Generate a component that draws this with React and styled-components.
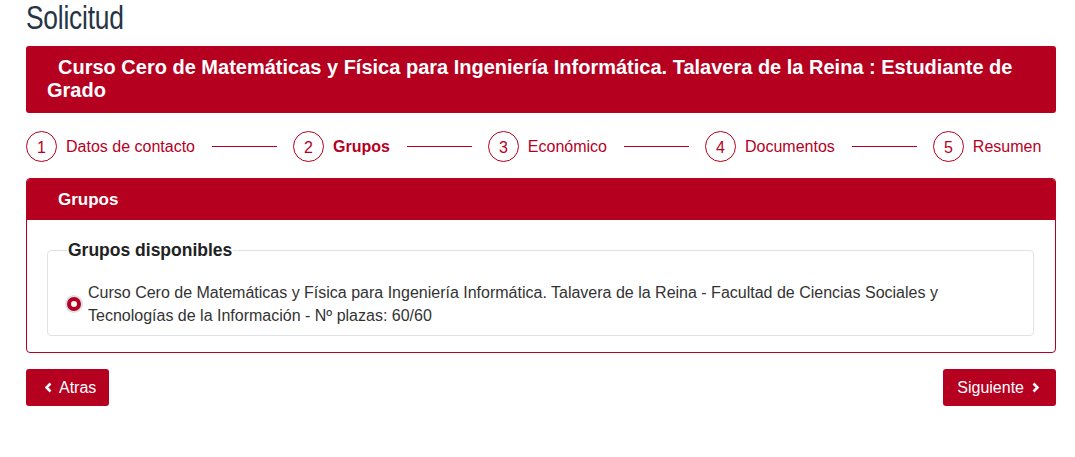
import React from 'react';
import styled, { createGlobalStyle } from 'styled-components';

const RED = '#b5001f';

const GlobalStyle = createGlobalStyle`
  body {
    margin: 0;
    background: #fff;
    font-family: "Liberation Sans", Arial, sans-serif;
  }
`;

const Page = styled.div`
  padding: 0 19px 0 26px;
`;

const Title = styled.h1`
  margin: -1px 0 0;
  display: inline-block;
  font-family: "Liberation Sans", Arial, sans-serif;
  font-weight: 400;
  font-size: 33px;
  line-height: 38px;
  letter-spacing: -0.3px;
  color: #263545;
  transform: scaleX(0.8);
  transform-origin: left center;
`;

const Banner = styled.div`
  margin-top: 9px;
  background: ${RED};
  border-radius: 3px;
  padding: 10px 21px 11px;
  color: #fff;
  font-weight: 700;
  font-size: 20px;
  line-height: 23px;
  text-indent: 11px;
`;

const Steps = styled.ol`
  list-style: none;
  margin: 18px 0 0;
  padding: 0;
  display: flex;
  align-items: center;
  height: 31px;
`;

const Step = styled.li`
  display: flex;
  align-items: center;
  gap: 9px;
  color: ${RED};
  font-size: 16px;
  font-weight: ${(p) => (p.$active ? 700 : 400)};
`;

const Circle = styled.span`
  width: 29px;
  height: 26px;
  padding-top: 3px;
  border: 1px solid ${RED};
  border-radius: 50%;
  display: flex;
  align-items: center;
  justify-content: center;
  font-weight: 400;
`;

const Line = styled.span`
  width: 65px;
  height: 1px;
  background: ${RED};
  margin: 0 16px 0 17px;
`;

const Panel = styled.section`
  margin-top: 16px;
  border: 1px solid ${RED};
  border-radius: 4px;
  overflow: hidden;
`;

const PanelHeader = styled.div`
  background: ${RED};
  color: #fff;
  font-weight: 700;
  font-size: 17px;
  height: 41px;
  display: flex;
  align-items: center;
  padding-left: 31px;
`;

const PanelBody = styled.div`
  padding: 20px 21px 16px 20px;
`;

const Fieldset = styled.fieldset`
  margin: 0;
  border: 1px solid #dfe2e8;
  border-radius: 4px;
  padding: 0 20px 8px 19px;
`;

const Legend = styled.legend`
  padding: 0 1px;
  font-size: 17.5px;
  font-weight: 700;
  line-height: 20px;
  color: #222;
`;

const Option = styled.label`
  margin-top: 21px;
  display: flex;
  align-items: center;
  gap: 7px;
  font-size: 16px;
  line-height: 23px;
  color: #333;
  cursor: pointer;
`;

const Radio = styled.span`
  flex: none;
  width: 6px;
  height: 6px;
  border-radius: 50%;
  background: #fff;
  border: 4px solid ${RED};
  box-shadow: 0 0 0 2px #dcdfe6;
`;

const Actions = styled.div`
  margin-top: 16px;
  display: flex;
  justify-content: space-between;
`;

const Button = styled.button`
  height: 37px;
  border: none;
  border-radius: 3px;
  background: ${RED};
  color: #fff;
  font-family: "Liberation Sans", Arial, sans-serif;
  font-size: 16px;
  padding: ${(p) => p.$pad};
  display: flex;
  align-items: center;
  gap: ${(p) => p.$gap}px;
  cursor: pointer;
`;

const Chevron = ({ dir }) => (
  <svg width="7" height="11" viewBox="0 0 7 11">
    <polyline
      points={dir === 'left' ? '5.5,1.5 1.5,5.5 5.5,9.5' : '1.5,1.5 5.5,5.5 1.5,9.5'}
      fill="none"
      stroke="#fff"
      strokeWidth="2.5"
    />
  </svg>
);

const steps = ['Datos de contacto', 'Grupos', 'Económico', 'Documentos', 'Resumen'];

export default function App() {
  return (
    <Page>
      <GlobalStyle />
      <Title>Solicitud</Title>
      <Banner>
        Curso Cero de Matemáticas y Física para Ingeniería Informática. Talavera de la Reina : Estudiante de Grado
      </Banner>

      <Steps>
        {steps.map((label, i) => (
          <React.Fragment key={label}>
            {i > 0 && <Line />}
            <Step $active={i === 1}>
              <Circle>{i + 1}</Circle>
              {label}
            </Step>
          </React.Fragment>
        ))}
      </Steps>

      <Panel>
        <PanelHeader>Grupos</PanelHeader>
        <PanelBody>
          <Fieldset>
            <Legend>Grupos disponibles</Legend>
            <Option>
              <Radio />
              Curso Cero de Matemáticas y Física para Ingeniería Informática. Talavera de la Reina - Facultad de Ciencias Sociales y Tecnologías de la Información - Nº plazas: 60/60
            </Option>
          </Fieldset>
        </PanelBody>
      </Panel>

      <Actions>
        <Button $pad="0 13px 0 19px" $gap={7}>
          <Chevron dir="left" />
          Atras
        </Button>
        <Button $pad="0 17px 0 14px" $gap={8}>
          Siguiente
          <Chevron dir="right" />
        </Button>
      </Actions>
    </Page>
  );
}
